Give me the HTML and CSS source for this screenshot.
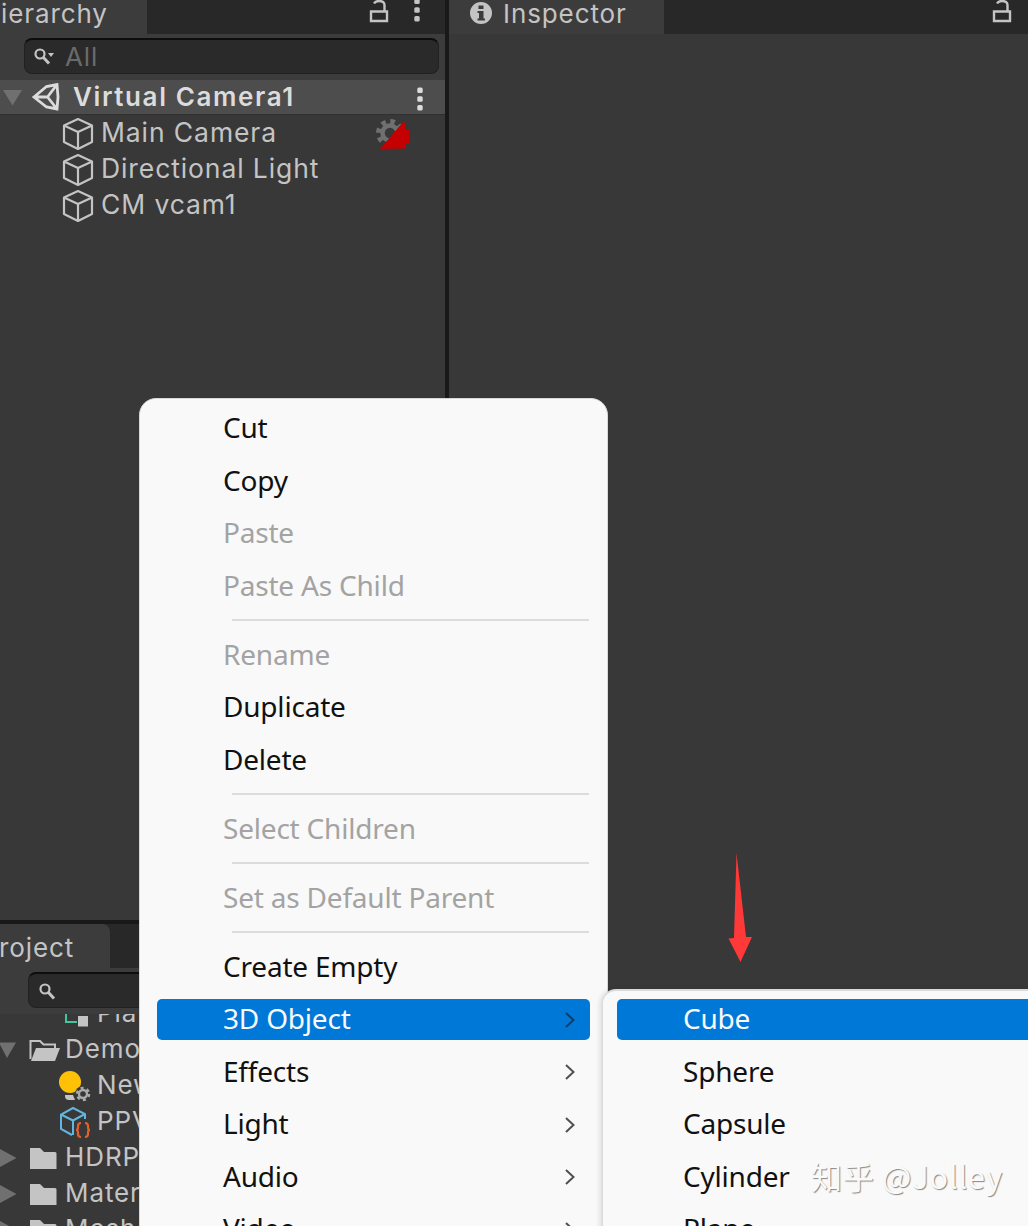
FILE: index.html
```html
<!DOCTYPE html>
<html lang="en">
<head>
  <meta charset="UTF-8">
  <meta name="viewport" content="width=device-width, initial-scale=1.0">
  <title>Unity Editor</title>
  <link rel="stylesheet" href="styles.css">
</head>
<body>
<svg class="defs">
  <symbol id="cube" viewBox="0 0 32 34">
    <path d="M16 2 L30 8.500 V25 L16 32 L2 25 V8.500 Z M2 8.500 L16 15 L30 8.500 M16 15 V32" fill="none" stroke="currentColor" stroke-width="2.200" stroke-linejoin="round"/>
  </symbol>
  <symbol id="lock" viewBox="0 0 20 24">
    <path d="M2 12.500 H18 V22 H2 Z M15.500 12 V6 Q15.500 2 10 2 Q6.500 2 5 4.500" fill="none" stroke="currentColor" stroke-width="2.400"/>
  </symbol>
  <symbol id="dots" viewBox="0 0 6 24">
    <rect x=".3" y=".6" width="5.400" height="5.400" rx="1.500" fill="currentColor"/>
    <rect x=".3" y="9.300" width="5.400" height="5.400" rx="1.500" fill="currentColor"/>
    <rect x=".3" y="18" width="5.400" height="5.400" rx="1.500" fill="currentColor"/>
  </symbol>
  <symbol id="search" viewBox="0 0 20 18">
    <circle cx="6" cy="6" r="4.500" fill="none" stroke="currentColor" stroke-width="2.200"/>
    <path d="M9 9 L15 15.500" stroke="currentColor" stroke-width="3"/>
  </symbol>
  <symbol id="folder" viewBox="0 0 28 23">
    <path d="M1 1 H11 L15 5 H26 Q27.500 5 27.500 6.500 V22 H1 Z" fill="currentColor"/>
  </symbol>
  <symbol id="chevron" viewBox="0 0 12 18">
    <path d="M2 2 L9.500 9 L2 16" fill="none" stroke="currentColor" stroke-width="2"/>
  </symbol>
</svg>

<div class="editor">
  <div class="side">
    <section class="hierarchy">
      <div class="tabs">
        <div class="tab">ierarchy</div>
        <div class="tools">
          <svg class="lock"><use href="#lock"/></svg>
          <svg class="dots"><use href="#dots"/></svg>
        </div>
      </div>
      <div class="toolbar">
        <div class="search">
          <svg class="glass"><use href="#search"/></svg>
          <svg class="caret" viewBox="0 0 6 4"><path d="M0 0H6L3 4Z" fill="currentColor"/></svg>
          <span>All</span>
        </div>
      </div>
      <div class="scene">
        <svg class="arrow" viewBox="0 0 20 17"><path d="M1 1H20L10.500 16.500Z" fill="currentColor"/></svg>
        <svg class="logo" viewBox="0 0 28 28">
          <path d="M2 14 L14.500 3.500 L25 1.500 L26 14 L25 26 L14.500 24 Z M2 14 H15.500 M15.500 14 L25 1.500 M15.500 14 L25 26" fill="none" stroke="currentColor" stroke-width="2.800"/>
        </svg>
        <span>Virtual Camera1</span>
        <svg class="dots"><use href="#dots"/></svg>
      </div>
      <ul class="objects">
        <li>
          <svg class="cube"><use href="#cube"/></svg>Main Camera
          <svg class="brain" viewBox="0 0 35 33">
            <circle cx="14" cy="15" r="7.500" fill="none" stroke="#707070" stroke-width="4.500"/>
            <circle cx="14" cy="15" r="11.500" fill="none" stroke="#707070" stroke-width="5" stroke-dasharray="4.500 4.530"/>
            <path d="M4 31 L27 4 L29.500 5 V12 H33.500 V25 H29.500 V30.500 Z" fill="#c40000"/>
          </svg>
        </li>
        <li><svg class="cube"><use href="#cube"/></svg>Directional Light</li>
        <li><svg class="cube"><use href="#cube"/></svg>CM vcam1</li>
      </ul>
    </section>

    <section class="project">
      <div class="tabs"><div class="tab">roject</div></div>
      <div class="toolbar">
        <div class="search"><svg class="glass"><use href="#search"/></svg></div>
      </div>
      <ul class="tree">
        <li class="asset">
          <svg class="asset-icon" viewBox="0 0 34 34">
            <path d="M8 8 V24 H19" fill="none" stroke="#43c59e" stroke-width="2"/>
            <path d="M20 18h10v10.500h-10z" fill="#c4c4c4"/>
          </svg>Pla
        </li>
        <li>
          <svg class="arrow" viewBox="0 0 20 17"><path d="M0 1H17L8 16.500Z" fill="currentColor"/></svg>
          <svg class="folder open" viewBox="0 0 31 23">
            <path d="M1.500 20 V2 H11 L14.500 5.500 H26 V9" fill="none" stroke="currentColor" stroke-width="2"/>
            <path d="M7 9 H31 L26 22 H2 Z" fill="currentColor"/>
          </svg>Demo
        </li>
        <li class="asset">
          <svg class="asset-icon" viewBox="0 0 34 34">
            <circle cx="12" cy="13" r="11" fill="#ffc107"/>
            <path d="M7 26h8l2 5h-6q-4 0-4-4z" fill="#c4c4c4"/>
            <circle cx="25" cy="25" r="8" fill="#383838"/>
            <circle cx="25" cy="25" r="4" fill="none" stroke="#aaa" stroke-width="2.400"/>
            <circle cx="25" cy="25" r="6" fill="none" stroke="#aaa" stroke-width="2.600" stroke-dasharray="3 3.283"/>
          </svg>New
        </li>
        <li class="asset">
          <svg class="asset-icon" viewBox="0 0 34 34">
            <path d="M14 30 L3 24 V9.500 L15 3 L27 9 V14 M3 9.500 L15 15.500 L27 9 M15 15.500 V30" fill="none" stroke="#62b5e0" stroke-width="2"/>
            <path d="M23 18 Q20 18 20 21 V22.500 Q20 25 18 25 Q20 25 20 27.500 V29 Q20 32 23 32 M27 18 Q30 18 30 21 V22.500 Q30 25 32 25 Q30 25 30 27.500 V29 Q30 32 27 32" fill="none" stroke="#e2602c" stroke-width="2.200"/>
          </svg>PPV
        </li>
        <li>
          <svg class="arrow" viewBox="0 0 20 20"><path d="M1 1V19L17.500 10Z" fill="currentColor"/></svg>
          <svg class="folder"><use href="#folder"/></svg>HDRP
        </li>
        <li>
          <svg class="arrow" viewBox="0 0 20 20"><path d="M1 1V19L17.500 10Z" fill="currentColor"/></svg>
          <svg class="folder"><use href="#folder"/></svg>Mater
        </li>
        <li>
          <svg class="arrow" viewBox="0 0 20 20"><path d="M1 1V19L17.500 10Z" fill="currentColor"/></svg>
          <svg class="folder"><use href="#folder"/></svg>Mesh
        </li>
      </ul>
    </section>
  </div>

  <section class="inspector">
    <div class="tabs">
      <div class="tab">
        <svg class="info" viewBox="0 0 22 22">
          <circle cx="11" cy="11" r="11" fill="currentColor"/>
          <path d="M8.500 3.500h5v3.500h-5z M7.500 9h6v7.500h1.500v2h-7.500v-2h1.500v-5.500h-1.500z" fill="#3c3c3c"/>
        </svg>
        Inspector
      </div>
      <div class="tools">
        <svg class="lock"><use href="#lock"/></svg>
      </div>
    </div>
  </section>

  <div class="menu context-menu">
    <div class="item">Cut</div>
    <div class="item">Copy</div>
    <div class="item disabled">Paste</div>
    <div class="item disabled">Paste As Child</div>
    <hr>
    <div class="item disabled">Rename</div>
    <div class="item">Duplicate</div>
    <div class="item">Delete</div>
    <hr>
    <div class="item disabled">Select Children</div>
    <hr>
    <div class="item disabled">Set as Default Parent</div>
    <hr>
    <div class="item">Create Empty</div>
    <div class="item active">3D Object<svg class="chevron"><use href="#chevron"/></svg></div>
    <div class="item">Effects<svg class="chevron"><use href="#chevron"/></svg></div>
    <div class="item">Light<svg class="chevron"><use href="#chevron"/></svg></div>
    <div class="item">Audio<svg class="chevron"><use href="#chevron"/></svg></div>
    <div class="item">Video<svg class="chevron"><use href="#chevron"/></svg></div>
  </div>

  <div class="menu submenu">
    <div class="item active">Cube</div>
    <div class="item">Sphere</div>
    <div class="item">Capsule</div>
    <div class="item">Cylinder</div>
    <div class="item">Plane</div>
  </div>

  <svg class="pointer" viewBox="0 0 24 110">
    <path d="M8.500 0 L18 84 L24 84 L12.500 109 L.5 85.500 L6 85 Z" fill="#ff3838"/>
  </svg>
  <div class="watermark">知乎 @Jolley</div>
</div>
</body>
</html>
```
FILE: styles.css
```css
* {
  box-sizing: border-box;
}

body {
  margin: 0;
  background: #383838;
  color: #c4c4c4;
  font-family: Inter, "Liberation Sans", sans-serif;
  font-size: 26px;
  letter-spacing: 0.9px;
}

ul {
  list-style: none;
  margin: 0;
  padding: 0;
}

svg {
  flex-shrink: 0;
}

.defs {
  display: none;
}

.editor {
  position: relative;
  display: flex;
  width: 1028px;
  height: 1226px;
  overflow: hidden;
}

.side {
  width: 449px;
  border-right: 4px solid #191919;
}

.hierarchy {
  height: 920px;
}

.inspector {
  flex: 1;
}

.tabs {
  display: flex;
  justify-content: space-between;
  height: 34px;
  background: #282828;
}

.tab {
  display: flex;
  align-items: center;
  background: #3c3c3c;
  white-space: nowrap;
}

.hierarchy .tab {
  width: 147px;
  padding: 0 0 7px 1px;
}

.inspector .tab {
  width: 215px;
  gap: 11px;
  padding: 0 0 7px 21px;
}

.info {
  width: 22px;
  height: 22px;
  margin-top: -1px;
}

.tools {
  display: flex;
  gap: 25px;
  padding-right: 25px;
}

.inspector .tools {
  padding-right: 16px;
}

.lock {
  width: 20px;
  height: 24px;
  margin-top: -1px;
}

.dots {
  width: 6px;
  height: 24px;
}

.tools .dots {
  margin-top: -2px;
}

.toolbar {
  height: 46px;
  padding: 4px 6px 0 24px;
  background: #3c3c3c;
}

.search {
  display: flex;
  align-items: center;
  height: 36px;
  padding-left: 10px;
  background: #2a2a2a;
  border: 1px solid #212121;
  border-top: 2px solid #0d0d0d;
  border-radius: 8px;
  color: #6a6a6a;
}

.glass {
  width: 20px;
  height: 18px;
  color: #c4c4c4;
}

.hierarchy .glass {
  margin-left: -1px;
}

.caret {
  width: 6px;
  height: 4px;
  margin: 0 11px 3px -6px;
  color: #c4c4c4;
}

.scene {
  display: flex;
  align-items: center;
  height: 35px;
  padding-right: 22px;
  background: #4d4d4d;
  border-bottom: 1px solid #303030;
  color: #dcdcdc;
  font-weight: 600;
  letter-spacing: 1.6px;
  white-space: nowrap;
}

.scene span {
  flex: 1;
  padding-bottom: 2px;
}

.scene .dots {
  margin-top: 3px;
}

.arrow {
  width: 20px;
  height: 17px;
  color: #707070;
}

.scene .arrow {
  width: 20px;
  margin-left: 2px;
}

.logo {
  width: 28px;
  height: 28px;
  margin: 0 13px 0 10px;
}

.objects {
  font-size: 26.5px;
  letter-spacing: 0.9px;
}

.objects li {
  display: flex;
  align-items: center;
  height: 36px;
  padding: 0 0 2px 62px;
  white-space: nowrap;
}

.cube {
  width: 32px;
  height: 34px;
  margin: 4px 7px 0 0;
}

.brain {
  width: 35px;
  height: 33px;
  margin: 4px 34px 0 auto;
}

.project {
  height: 306px;
  border-top: 4px solid #191919;
}

.project .tabs {
  height: 44px;
}

.project .tab {
  width: 111px;
  padding-top: 3px;
  margin-left: -1px;
  border-top-right-radius: 8px;
}

.project .toolbar {
  padding-left: 28px;
}

.project .glass {
  margin-top: 2px;
}

.tree {
  height: 212px;
  overflow: hidden;
}

.tree li {
  display: flex;
  align-items: center;
  height: 36px;
  padding-bottom: 2px;
  white-space: nowrap;
}

.tree li:first-child {
  margin-top: -18px;
  height: 35px;
}

.tree .asset {
  padding-left: 58px;
}

.asset-icon {
  width: 34px;
  height: 34px;
  margin: 4px 5px 0 0;
}

.folder {
  width: 28px;
  height: 23px;
  margin: 4px 8px 0 10px;
}

.folder.open {
  width: 31px;
  margin-right: 5px;
}

.tree .arrow {
  height: 20px;
  margin: 4px 0 0 -1px;
}

.menu {
  position: absolute;
  background: #f9f9f9;
  color: #111;
  font-family: "Noto Sans", "Open Sans", sans-serif;
  font-size: 28px;
  letter-spacing: -0.2px;
}

.context-menu {
  left: 139px;
  top: 398px;
  width: 469px;
  height: 850px;
  padding: 3px 17px 0 17px;
  border: 1px solid #d8d8d8;
  border-radius: 17px;
}

.submenu {
  left: 602px;
  top: 989px;
  width: 450px;
  height: 260px;
  padding: 2px 0 0 14px;
  border: 1px solid #dadada;
  border-top: 2px solid #dadada;
  border-radius: 14px;
  box-shadow: -2px 1px 5px rgba(0, 0, 0, 0.12);
}

.item {
  display: flex;
  align-items: center;
  justify-content: space-between;
  height: 40.5px;
  margin: 6px 0 12px;
  padding: 0 14px 2px 66px;
  border-radius: 5px;
  white-space: nowrap;
}

.item.disabled {
  color: #a3a3a3;
}

.item.active {
  background: #0078d7;
  color: #f9f9f9;
}

.chevron {
  width: 12px;
  height: 18px;
  margin-top: 3px;
  color: #505050;
}

.active .chevron {
  color: #103d66;
}

hr {
  height: 2px;
  margin: 12.5px 1px 14px 75px;
  border: 0;
  background: #dcdcdc;
}

.pointer {
  position: absolute;
  left: 728px;
  top: 853px;
  width: 24px;
  height: 110px;
}

.watermark {
  position: absolute;
  left: 811px;
  top: 1156px;
  color: #fafafa;
  font-family: "Noto Sans CJK SC", "Noto Sans", sans-serif;
  font-size: 31px;
  line-height: 40px;
  letter-spacing: 0.7px;
  text-shadow: 1px 1px 1px #888;
  white-space: nowrap;
}
```
